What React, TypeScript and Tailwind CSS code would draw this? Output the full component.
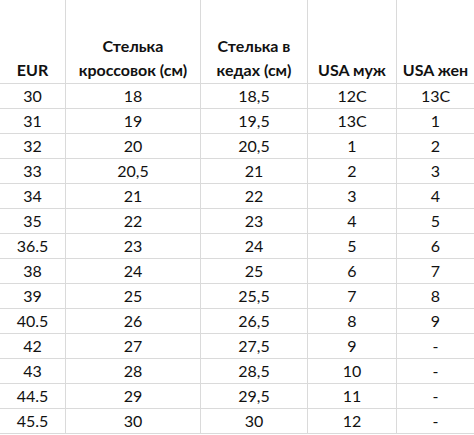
const rows: [string, string, string, string, string][] = [
  ["30", "18", "18,5", "12C", "13C"],
  ["31", "19", "19,5", "13C", "1"],
  ["32", "20", "20,5", "1", "2"],
  ["33", "20,5", "21", "2", "3"],
  ["34", "21", "22", "3", "4"],
  ["35", "22", "23", "4", "5"],
  ["36.5", "23", "24", "5", "6"],
  ["38", "24", "25", "6", "7"],
  ["39", "25", "25,5", "7", "8"],
  ["40.5", "26", "26,5", "8", "9"],
  ["42", "27", "27,5", "9", "-"],
  ["43", "28", "28,5", "10", "-"],
  ["44.5", "29", "29,5", "11", "-"],
  ["45.5", "30", "30", "12", "-"],
];

const cols = "grid grid-cols-[66px_135px_107px_89px_77px]";

export default function App() {
  return (
    <div
      className="w-[474px] h-[435px] overflow-hidden bg-white text-[#111]"
      style={{ fontFamily: "Lato, 'Liberation Sans', sans-serif" }}
    >
      <div className={`${cols} h-[84px] border-b border-[#dadada] text-[16px] font-bold leading-[24px]`}>
        <div className="flex items-end justify-center border-r border-[#dadada] pb-[1px]">EUR</div>
        <div className="flex flex-col items-center justify-end border-r border-[#dadada] pb-[1px]">
          <span>Стелька</span>
          <span>кроссовок (см)</span>
        </div>
        <div className="flex flex-col items-center justify-end border-r border-[#dadada] pb-[1px]">
          <span>Стелька в</span>
          <span>кедах (см)</span>
        </div>
        <div className="flex items-end justify-center border-r border-[#dadada] pb-[1px]">USA муж</div>
        <div className="flex items-end justify-center pb-[1px]">USA жен</div>
      </div>
      {rows.map((r, i) => (
        <div key={i} className={`${cols} h-[25px] border-b border-[#dadada] text-[16px] leading-[24px]`}>
          {r.map((c, j) => (
            <div
              key={j}
              className={`flex items-center justify-center ${j < 4 ? "border-r border-[#dadada]" : ""}`}
            >
              {c}
            </div>
          ))}
        </div>
      ))}
    </div>
  );
}
